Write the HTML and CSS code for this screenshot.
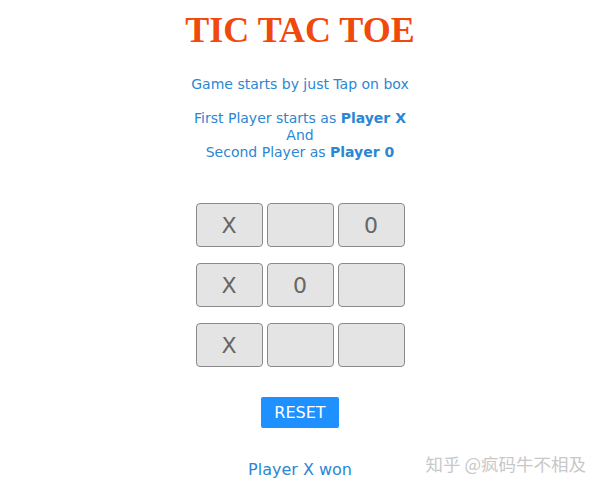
FILE: index.html
```html
<!DOCTYPE html>
<html lang="en">
<head>
    <meta charset="UTF-8">
    <meta name="viewport" content="width=device-width, initial-scale=1.0">
    <title>Tic Tac Toe</title>
    <link rel="stylesheet" href="styles.css">
</head>
<body>
    <div class="container">
        <h1>TIC TAC TOE</h1>
        <p class="intro">Game starts by just Tap on box</p>
        <p class="rules">
            First Player starts as <b>Player X</b><br>
            And<br>
            Second Player as <b>Player 0</b>
        </p>

        <div class="board">
            <div class="row">
                <button class="cell">X</button>
                <button class="cell"></button>
                <button class="cell">0</button>
            </div>
            <div class="row">
                <button class="cell">X</button>
                <button class="cell">0</button>
                <button class="cell"></button>
            </div>
            <div class="row">
                <button class="cell">X</button>
                <button class="cell"></button>
                <button class="cell"></button>
            </div>
        </div>

        <button class="reset-button">RESET</button>
        <p class="result">Player X won</p>
    </div>

    <div class="watermark">知乎 @疯码牛不相及</div>
</body>
</html>
```

FILE: styles.css
```css
body {
    font-family: "DejaVu Sans", Verdana, sans-serif;
    background-color: #fff;
    margin: 0;
    padding: 0;
}

.container {
    display: flex;
    flex-direction: column;
    align-items: center;
    text-align: center;
}

h1 {
    font-family: "Liberation Serif", "Times New Roman", serif;
    font-size: 36px;
    font-weight: bold;
    color: #f0490c;
    margin: 9px 0 0;
}

.intro,
.rules {
    color: #2b87d3;
    font-size: 14px;
    line-height: 17px;
    margin: 0;
}

.intro {
    margin-top: 25px;
}

.rules {
    margin-top: 17px;
}

.board {
    margin-top: 42px;
    display: flex;
    flex-direction: column;
    gap: 16px;
}

.row {
    display: flex;
    gap: 4px;
}

.cell {
    width: 67px;
    height: 44px;
    background-color: #e4e4e4;
    border: 1px solid #8a8a8a;
    border-radius: 4px;
    font-family: "DejaVu Sans", Verdana, sans-serif;
    font-size: 22px;
    color: #666;
    cursor: pointer;
}

.reset-button {
    margin-top: 30px;
    padding: 0 13px;
    height: 31px;
    background-color: #1e90ff;
    color: #fff;
    border: none;
    border-radius: 2px;
    font-family: "DejaVu Sans", Verdana, sans-serif;
    font-size: 16px;
    cursor: pointer;
}

.result {
    margin-top: 32px;
    color: #2b87d3;
    font-size: 16px;
}

.watermark {
    position: absolute;
    right: 14px;
    bottom: 18px;
    font-family: "Noto Sans CJK SC", sans-serif;
    font-size: 17.5px;
    color: #c8c8c8;
}
```
